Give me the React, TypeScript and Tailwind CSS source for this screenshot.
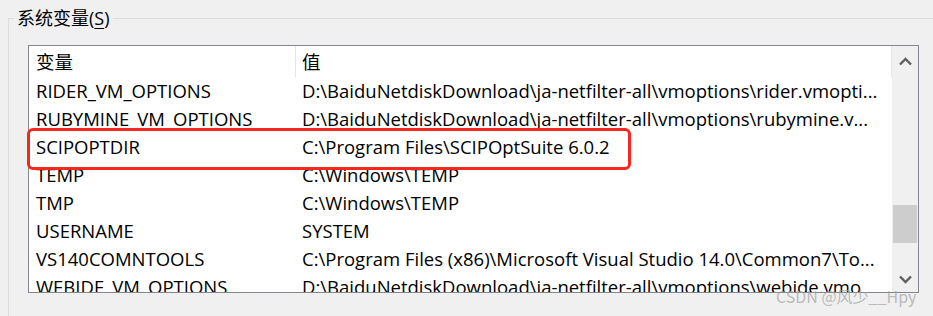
import React from "react";

const rows: [string, string][] = [
  ["RIDER_VM_OPTIONS", "D:\\BaiduNetdiskDownload\\ja-netfilter-all\\vmoptions\\rider.vmopti..."],
  ["RUBYMINE_VM_OPTIONS", "D:\\BaiduNetdiskDownload\\ja-netfilter-all\\vmoptions\\rubymine.v..."],
  ["SCIPOPTDIR", "C:\\Program Files\\SCIPOptSuite 6.0.2"],
  ["TEMP", "C:\\Windows\\TEMP"],
  ["TMP", "C:\\Windows\\TEMP"],
  ["USERNAME", "SYSTEM"],
  ["VS140COMNTOOLS", "C:\\Program Files (x86)\\Microsoft Visual Studio 14.0\\Common7\\To..."],
  ["WEBIDE_VM_OPTIONS", "D:\\BaiduNetdiskDownload\\ja-netfilter-all\\vmoptions\\webide.vmo"],
];

const font = { fontFamily: '"Open Sans", "Noto Sans CJK SC", sans-serif' };

function Chevron({ up }: { up?: boolean }) {
  return (
    <svg width="13" height="9" viewBox="0 0 13 9">
      <polyline
        points={up ? "1,7.5 6.5,2 12,7.5" : "1,1.5 6.5,7 12,1.5"}
        fill="none"
        stroke="#606060"
        strokeWidth="2.4"
      />
    </svg>
  );
}

export default function App() {
  return (
    <div
      className="relative w-[933px] h-[316px] overflow-hidden bg-[#f0f0f0] pl-[8px] pt-[18px] text-black"
      style={font}
    >
      <div className="relative h-full border-l border-t border-[#dcdcdc] pl-[19px] pt-[26px]">
        <div className="absolute left-[5px] -top-[13px] bg-[#f0f0f0] px-[3px] text-[18px] leading-[24px]">
          系统变量(<span className="underline underline-offset-[3px]">S</span>)
        </div>
        <div className="flex w-[891px] h-[248px] border border-[#828790] bg-white">
          <div className="flex-1 overflow-hidden text-[18.5px]">
            <div className="flex h-[31px] items-center">
              <div className="w-[266px] pl-[7px]">变量</div>
              <div className="w-px h-full bg-[#e5e5e5]" />
              <div className="flex-1 pl-[6px]">值</div>
              <div className="w-px h-full bg-[#e5e5e5]" />
            </div>
            {rows.map(([k, v]) => (
              <div key={k} className="flex h-[28px] items-center whitespace-nowrap">
                <div className="w-[267px] shrink-0 pl-[7px]">{k}</div>
                <div className="flex-1 overflow-hidden pl-[6px]">{v}</div>
              </div>
            ))}
          </div>
          <div className="flex w-[26px] flex-col bg-[#f0f0f0]">
            <div className="flex h-[31px] items-center justify-center">
              <Chevron up />
            </div>
            <div className="flex-1 pt-[128px]">
              <div className="mx-[1px] h-[38px] bg-[#cdcdcd]" />
            </div>
            <div className="flex h-[26px] items-center justify-center">
              <Chevron />
            </div>
          </div>
        </div>
      </div>

      <div className="absolute left-[27px] top-[128px] w-[604px] h-[42px] rounded-[6px] border-[3px] border-[#f8261c]" />

      <div
        className="absolute left-[776px] top-[285px] text-[16px] leading-[22px] text-[#a0a0a0]/70"
        style={{ fontFamily: '"Noto Sans CJK SC", sans-serif' }}
      >
        CSDN @风少__Hpy
      </div>
    </div>
  );
}
